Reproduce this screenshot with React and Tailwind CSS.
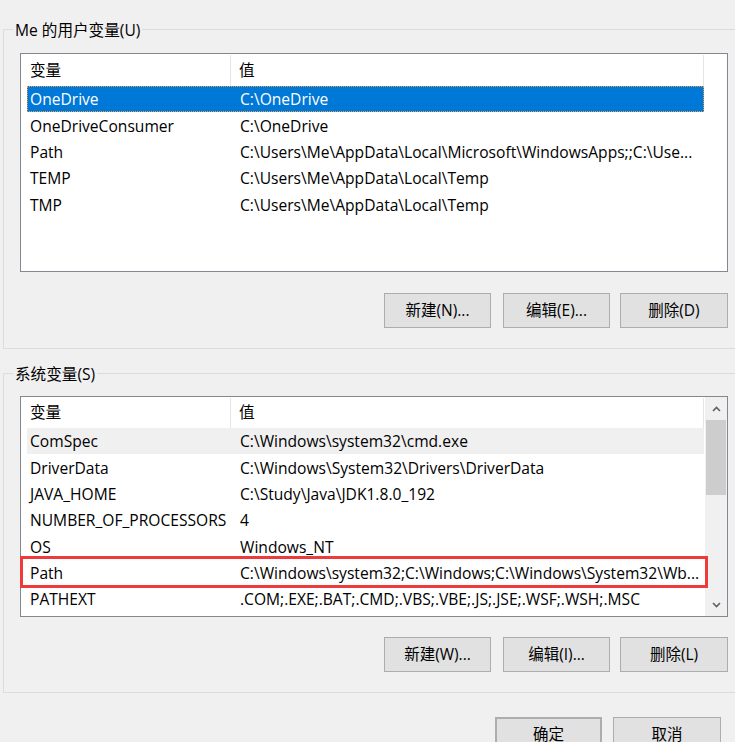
import React from "react";

const userVars = [
  { name: "OneDrive", value: "C:\\OneDrive", selected: true },
  { name: "OneDriveConsumer", value: "C:\\OneDrive" },
  { name: "Path", value: "C:\\Users\\Me\\AppData\\Local\\Microsoft\\WindowsApps;;C:\\Use..." },
  { name: "TEMP", value: "C:\\Users\\Me\\AppData\\Local\\Temp" },
  { name: "TMP", value: "C:\\Users\\Me\\AppData\\Local\\Temp" },
];

const sysVars = [
  { name: "ComSpec", value: "C:\\Windows\\system32\\cmd.exe", hover: true },
  { name: "DriverData", value: "C:\\Windows\\System32\\Drivers\\DriverData" },
  { name: "JAVA_HOME", value: "C:\\Study\\Java\\JDK1.8.0_192" },
  { name: "NUMBER_OF_PROCESSORS", value: "4" },
  { name: "OS", value: "Windows_NT" },
  { name: "Path", value: "C:\\Windows\\system32;C:\\Windows;C:\\Windows\\System32\\Wb..." },
  { name: "PATHEXT", value: ".COM;.EXE;.BAT;.CMD;.VBS;.VBE;.JS;.JSE;.WSF;.WSH;.MSC" },
];

const Button = ({ children, className = "" }) => (
  <button
    className={
      "h-[35px] flex items-center justify-center bg-[#e1e1e1] border border-[#adadad] text-[15.5px] leading-none " +
      className
    }
  >
    {children}
  </button>
);

const Header = ({ h }) => (
  <div className={"flex shrink-0 pt-[1px] " + h}>
    <div className="w-[210px] pl-[9px] flex items-center border-r border-[#e5e5e5]">变量</div>
    <div className="w-[473px] pl-[8px] flex items-center border-r border-[#e5e5e5]">值</div>
  </div>
);

const Row = ({ item }) => (
  <div
    className={
      "w-[677px] h-[26.3px] pt-[2px] flex items-center whitespace-nowrap " +
      (item.selected
        ? "bg-[#0078d7] text-white outline-1 outline-dotted outline-[#f0a040] -outline-offset-1"
        : item.hover
        ? "bg-[#f0f0f0]"
        : "")
    }
  >
    <div className="w-[204px] pl-[3px] overflow-hidden">{item.name}</div>
    <div className="pl-[9px] overflow-hidden">{item.value}</div>
  </div>
);

const GroupTitle = ({ children }) => (
  <span className="absolute left-[9px] top-[-10px] px-[2px] bg-[#f0f0f0] leading-[20px]">{children}</span>
);

export default function App() {
  return (
    <div className="w-[735px] h-[742px] overflow-hidden bg-[#f0f0f0] text-[15.6px] text-black font-['Open_Sans','Noto_Sans_CJK_SC',sans-serif]">
      {/* user variables */}
      <div className="relative ml-[3px] mt-[29px] w-[760px] h-[320px] border border-[#dcdcdc] pt-[23px] pl-[16px]">
        <GroupTitle>Me 的用户变量(U)</GroupTitle>
        <div className="w-[708px] h-[219px] border border-[#828790] bg-white flex flex-col">
          <Header h="h-[32px]" />
          <div className="pl-[6px] flex flex-col">
            {userVars.map((v, i) => (
              <Row key={i} item={v} />
            ))}
          </div>
        </div>
        <div className="w-[708px] mt-[21px] flex justify-end">
          <Button className="w-[107px]">新建(N)...</Button>
          <Button className="w-[107px] ml-[12px]">编辑(E)...</Button>
          <Button className="w-[108px] ml-[10px]">删除(D)</Button>
        </div>
      </div>

      {/* system variables */}
      <div className="relative ml-[3px] mt-[24px] w-[760px] h-[320px] border border-[#dcdcdc] pt-[22px] pl-[16px]">
        <GroupTitle>系统变量(S)</GroupTitle>
        <div className="relative w-[708px] h-[221px] border border-[#828790] bg-white flex">
          <div className="w-[684px] flex flex-col">
            <Header h="h-[31px]" />
            <div className="pl-[6px] flex flex-col">
              {sysVars.map((v, i) => (
                <Row key={i} item={v} />
              ))}
            </div>
          </div>
          <div className="w-[22px] bg-[#f0f0f0] flex flex-col">
            <div className="h-[23px] flex items-center justify-center">
              <svg width="9" height="6" viewBox="0 0 9 6">
                <path d="M1 5 L4.5 1.5 L8 5" fill="none" stroke="#606060" strokeWidth="1.6" />
              </svg>
            </div>
            <div className="mx-[1px] h-[75px] bg-[#cdcdcd]" />
            <div className="flex-1" />
            <div className="h-[23px] flex items-center justify-center">
              <svg width="9" height="6" viewBox="0 0 9 6">
                <path d="M1 1 L4.5 4.5 L8 1" fill="none" stroke="#606060" strokeWidth="1.6" />
              </svg>
            </div>
          </div>
          <div className="absolute left-[-1px] top-[159px] w-[688px] h-[32px] border-[3px] border-[#ee3a3a]" />
        </div>
        <div className="w-[708px] mt-[20px] flex justify-end">
          <Button className="w-[107px]">新建(W)...</Button>
          <Button className="w-[107px] ml-[12px]">编辑(I)...</Button>
          <Button className="w-[108px] ml-[10px]">删除(L)</Button>
        </div>
      </div>

      <div className="mt-[24px] pr-[14px] flex justify-end">
        <Button className="w-[107px] border-2 border-[#0078d7]">确定</Button>
        <Button className="w-[108px] ml-[11px]">取消</Button>
      </div>
    </div>
  );
}
